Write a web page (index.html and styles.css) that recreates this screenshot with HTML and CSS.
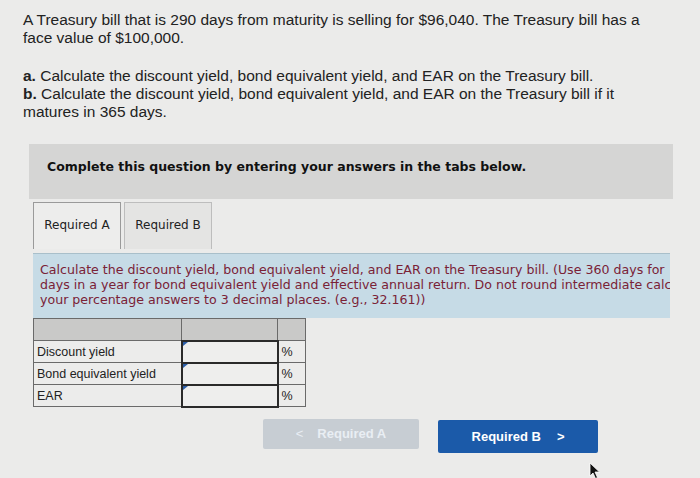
FILE: index.html
```html
<!DOCTYPE html>
<html>
<head>
<meta charset="utf-8">
<link rel="stylesheet" href="styles.css">
</head>
<body>
<div class="page">
  <div class="question">
    <p class="para">A Treasury bill that is 290 days from maturity is selling for $96,040. The Treasury bill has a<br>face value of $100,000.</p>
    <p class="para parts"><b>a.</b> Calculate the discount yield, bond equivalent yield, and EAR on the Treasury bill.<br><b>b.</b> Calculate the discount yield, bond equivalent yield, and EAR on the Treasury bill if it<br>matures in 365 days.</p>
  </div>
  <div class="banner">Complete this question by entering your answers in the tabs below.</div>
  <div class="tabs">
    <div class="tab active">Required A</div>
    <div class="tab">Required B</div>
  </div>
  <div class="instr">
    <div class="line">Calculate the discount yield, bond equivalent yield, and EAR on the Treasury bill. (Use 360 days for</div>
    <div class="line">days in a year for bond equivalent yield and effective annual return. Do not round intermediate calc</div>
    <div class="line">your percentage answers to 3 decimal places. (e.g., 32.161))</div>
  </div>
  <table class="grid">
    <tr class="head"><td class="c1"></td><td class="c2"></td><td class="c3"></td></tr>
    <tr><td class="c1">Discount yield</td><td class="c2 inp"><span class="tri"></span></td><td class="c3">%</td></tr>
    <tr><td class="c1">Bond equivalent yield</td><td class="c2 inp"><span class="tri"></span></td><td class="c3">%</td></tr>
    <tr><td class="c1">EAR</td><td class="c2 inp"><span class="tri"></span></td><td class="c3">%</td></tr>
  </table>
  <div class="nav">
    <div class="btn prev"><span class="chev">&lt;</span>Required A</div>
    <div class="btn next">Required B<span class="chev">&gt;</span></div>
  </div>
  <svg class="cursor" width="12" height="18" viewBox="0 0 12 18"><path d="M1 1 L1 14 L4 11 L6.5 16.5 L8.5 15.5 L6 10 L10.5 10 Z" fill="#111" stroke="#fff" stroke-width="0.8"/></svg>
</div>
</body>
</html>
```
FILE: styles.css
```css
html, body { margin: 0; padding: 0; }
body { background: #ebebea; width: 700px; height: 478px; overflow: hidden; }
.page { position: relative; width: 700px; height: 478px; }
.question { padding: 11px 0 0 23px; font-family: "Liberation Sans", Arial, sans-serif; font-size: 15.5px; line-height: 18px; color: #222; }
.para { margin: 0; }
.parts { margin-top: 20px; }
.parts b { font-weight: bold; }
.banner { margin: 23px 0 0 29px; width: 644px; height: 55px; background: #d5d5d4; box-sizing: border-box; padding: 15px 0 0 18px; font-family: "DejaVu Sans", Verdana, sans-serif; font-weight: bold; font-size: 12.5px; color: #111; }
.tabs { display: flex; gap: 3px; margin: 3px 0 0 33px; height: 47px; }
.tab { width: 88px; box-sizing: border-box; border: 1px solid #bdbdbd; border-bottom: none; background: #e4e4e3; font-family: "DejaVu Sans", Verdana, sans-serif; font-size: 12px; color: #222; padding-top: 15px; text-align: center; }
.tab.active { background: #ededec; border-color: #9a9a9a; }
.instr { margin: 4px 0 0 33px; width: 637px; height: 65px; box-sizing: border-box; background: #c6dbe6; border-top: 1px solid #a9bfca; padding: 8px 0 0 7px; font-family: "DejaVu Sans", Verdana, sans-serif; font-size: 12.6px; line-height: 15px; color: #7a2236; overflow: hidden; }
.line { white-space: nowrap; overflow: hidden; }
.grid { margin: 0 0 0 33px; border-collapse: collapse; font-family: "Liberation Sans", Arial, sans-serif; font-size: 12.5px; color: #222; }
.grid td { border: 1px solid #6a6a6a; height: 22px; padding: 0 0 0 3px; box-sizing: border-box; background: #ececeb; }
.grid .head td { background: #c9c9c8; height: 22px; }
.c1 { width: 148px; }
.c2 { width: 96px; }
.c3 { width: 28px; padding-left: 3px; }
.grid .inp { border: 2px solid #2a2a2a; position: relative; background: #eeeeed; }
.tri { position: absolute; left: 0; top: 0; width: 0; height: 0; border-top: 4px solid #2b5ea8; border-right: 5px solid transparent; }
.nav { display: flex; align-items: flex-start; gap: 19px; margin: 11px 0 0 263px; }
.btn { display: flex; align-items: center; justify-content: center; font-family: "Liberation Sans", Arial, sans-serif; font-weight: bold; font-size: 13px; border-radius: 2px; }
.prev { width: 156px; height: 30px; background: #c7cdd3; color: #e9eef3; }
.prev .chev { margin-right: 14px; font-weight: normal; }
.next { margin-top: 1px; width: 160px; height: 33px; background: #1b5aa9; color: #fff; }
.next .chev { margin-left: 16px; }
.cursor { position: absolute; left: 589px; top: 462px; }
```
